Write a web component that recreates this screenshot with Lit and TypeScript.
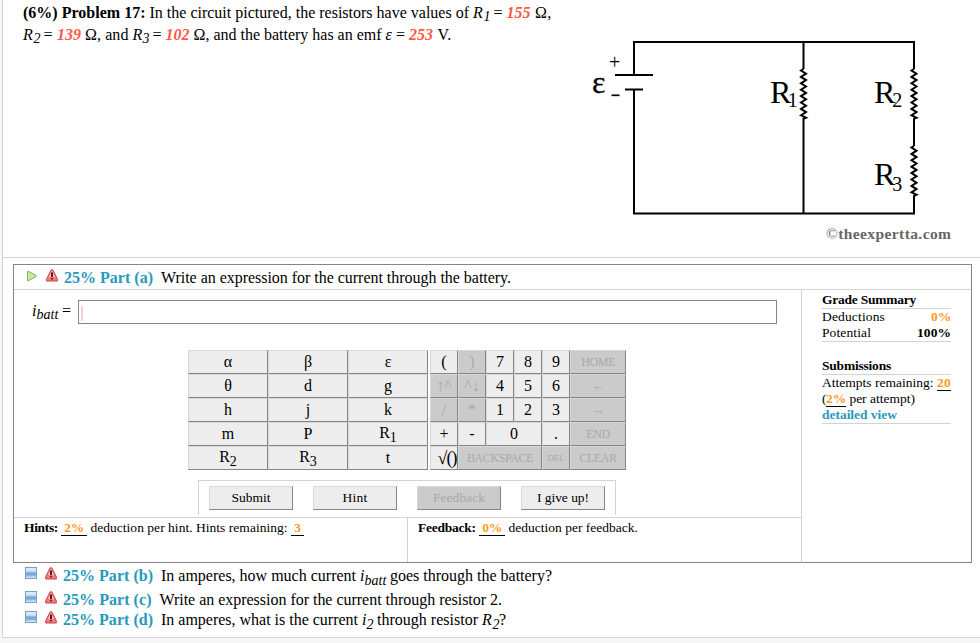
import { LitElement, html, svg, css } from "lit";
import { customElement } from "lit/decorators.js";

type Run = [text: string, start: number, kind?: string];

const STYLES: Record<string, string> = {
  "": "",
  b: "bold",
  blue: "bold",
  amber: "bold",
  i: "italic",
  red: "italic bold",
};

const pen = document.createElement("canvas").getContext("2d")!;

/** Lays out runs of text so each one begins at its own start position. */
function line(size: number, end: number, runs: Run[]) {
  return runs.map(([text, start, kind = ""], i) => {
    const width = (i + 1 < runs.length ? runs[i + 1][1] : end) - start;
    const sub = kind === "sub" || kind === "isub";
    const style = kind === "isub" ? "italic" : STYLES[kind] ?? "";
    pen.font = `${style} ${sub ? size - 2 : size}px "Liberation Serif"`;
    const spacing = (width - pen.measureText(text).width) / text.length;
    return html`<span class="run ${kind}" style="letter-spacing:${spacing.toFixed(3)}px">${text}</span>`;
  });
}

const warning = svg`<svg class="warn" width="12" height="13" viewBox="0 0 12 13">
  <path d="M4.9 1.300Q6 -.2 7.100 1.300L11.300 9.800V12H.7V9.800Z" fill="#f47a7a" stroke="#c4474a" stroke-linejoin="round"/>
  <path d="M6 1.800L9 8H3Z" fill="#fbd0cc"/>
  <path d="M5 3.600H7V8H5ZM5.200 9H6.800V10.500H5.200Z" fill="#5a1216"/>
</svg>`;

const play = svg`<svg class="mark" width="12" height="13" viewBox="0 0 12 13">
  <path d="M1.500 1.500Q1.500 1 2.200 1.200L10 5.300Q10.800 6 10 6.600L2.200 10.800Q1.500 11 1.500 10.500Z" fill="#c9e8a4" stroke="#86ad62"/>
</svg>`;

const box = svg`<svg class="mark" width="12" height="12" viewBox="0 0 12 12">
  <defs><linearGradient id="sky" x1="0" y1="0" x2="0" y2="1">
    <stop offset="0" stop-color="#e8f1fa"/><stop offset=".35" stop-color="#c2daf2"/>
    <stop offset=".5" stop-color="#6fa3dc"/><stop offset=".75" stop-color="#7fb0e4"/><stop offset="1" stop-color="#cfe3f6"/>
  </linearGradient></defs>
  <rect x=".5" y=".5" width="11" height="11" fill="#d3e4f5" stroke="#7f9fc2"/>
  <rect x="1" y="1.500" width="10" height="9" fill="url(#sky)"/>
</svg>`;

const zigzag = (x: number, y: number) => {
  let d = `M${x} ${y}l-2.5 1.5`;
  for (let k = 0; k < 7; k++) d += "l5 3.2l-5 3.2";
  return `${d}l5 2.4l-2.5 1`;
};

@customElement("app-root")
export class AppRoot extends LitElement {
  static styles = css`
    :host { display: block; width: 980px; height: 643px; overflow: hidden; background: #f7f7f7;
      font-family: "Liberation Serif", "Times New Roman", serif; color: #000; }
    * { box-sizing: border-box; }
    .page { height: 638px; background: #fff; border-bottom: 1px solid #d3d3d3; border-left: 1px solid #d3d3d3;
      margin-left: 2px; display: flex; flex-direction: column; }
    .problem { height: 258px; border-bottom: 1px solid #d3d3d3; display: flex; }
    .words { width: 577px; padding: 2px 0 0 20px; font-size: 16px; line-height: 22px; }
    .txt, .run { white-space: pre; }
    .b, .blue, .amber, .red { font-weight: bold; }
    .i, .isub, .red { font-style: italic; }
    .red { color: #ff5a47; }
    .blue { color: #2799bd; }
    .amber { color: #ff9a1e; }
    .sub, .isub { font-size: calc(1em - 2px); vertical-align: -3px; line-height: 0; }
    .part .isub { vertical-align: -4px; }
    .panel { margin: 6px 8px 0 10px; height: 299px; border: 1px solid #858585; display: flex; flex-direction: column; }
    .head { height: 25px; border-bottom: 1px solid #d3d3d3; display: flex; padding-left: 12px; font-size: 16px; line-height: 26px; }
    .mark { margin: 5px 8px 0 0; flex: none; }
    .warn { margin: 4px 6px 0 0; flex: none; }
    .cols { flex: 1; display: flex; min-height: 0; }
    .main { width: 788px; border-right: 1px solid #d3d3d3; display: flex; flex-direction: column; }
    .answer { display: flex; height: 60px; padding: 10px 0 0 18px; }
    .answer .txt { width: 46px; font-size: 16px; line-height: 22px; }
    .field { width: 699px; height: 24px; border: 1px solid #858585; padding: 5px 2px; }
    .caret { width: 2px; height: 15px; background: #fcd0bd; border-right: 1px solid #f3cdee; }
    .pads { display: flex; gap: 2px; padding-left: 174px; height: 120px; }
    .vars { display: grid; grid-template-columns: repeat(3, 80px); grid-auto-rows: 24px; }
    .keys { display: grid; grid-template-columns: repeat(5, 28px) 56px; grid-auto-rows: 24px; }
    .key { display: flex; align-items: center; justify-content: center; background: #ededed; font-size: 16px; white-space: pre;
      border: 1px solid; border-color: #d8d8d8 #858585 #858585 #d8d8d8; line-height: 20px; }
    .named { padding-bottom: 3px; }
    .key .sub { vertical-align: -4px; }
    .off { background: #cbcbcb; color: #a9a9a9; }
    .small { font-size: 12px; letter-spacing: -.4px; }
    .arrow { font-size: 13px; }
    .tiny { font-size: 9px; }
    .wide { grid-column: span 2; }
    .wider { grid-column: span 3; }
    .root { font-size: 18px; letter-spacing: -1px; padding-left: 6px; }
    .actions { margin: 10px 0 0 184px; width: 418px; height: 35px; border: 1px solid #d3d3d3; border-bottom: 0;
      display: flex; gap: 20px; padding: 5px 10px; }
    .btn { width: 84px; height: 24px; font-size: 13.500px; }
    .notes { margin-top: 2px; flex: 1; border-top: 1px solid #d3d3d3; display: flex; font-size: 13.500px; line-height: 20px; }
    .hints { width: 394px; border-right: 1px solid #d3d3d3; padding-left: 10px; }
    .feed { padding-left: 10px; }
    .u { border-bottom: 1px solid #000; }
    .side { padding: 1px 0 0 20px; width: 149px; font-size: 13.500px; line-height: 16px; }
    .side .txt { height: 16px; }
    .side .title { height: 18px; line-height: 18px; border-bottom: 1px solid #d3d3d3; }
    .side .last { height: 17px; border-bottom: 1px solid #d3d3d3; }
    .gap { height: 15px; }
    .part { display: flex; padding-left: 22px; font-size: 16px; line-height: 18px; height: 20px; }
    .part .mark, .part .warn { margin-top: 0; }
    .part.first { height: 24px; margin-top: 4px; }
  `;

  circuit() {
    return html`<svg width="390" height="256" viewBox="580 0 390 256">
      <g fill="none" stroke="#000" stroke-width="2">
        <path d="M634 75V42H914V69M803.500 42V69M803.500 118V213M914 118V146M914 195V213.500H634V90"/>
        <path d="M615 75H653M625 89.500H643"/>
        <path d="${zigzag(803.5, 69)}${zigzag(914, 69)}${zigzag(914, 146)}"/>
      </g>
      <g font-family="Liberation Serif">
        <text x="592" y="92.500" font-size="32" stroke="#000" stroke-width=".3">ε</text>
        <text x="609" y="69" font-size="20">+</text>
        <path d="M611.500 95.300H619.500" stroke="#000" stroke-width="1.700"/>
        <text x="770" y="102.500" font-size="32">R<tspan dx="-3.500" dy="4" font-size="20">1</tspan></text>
        <text x="874" y="102.500" font-size="32">R<tspan dx="-3" dy="4.500" font-size="20">2</tspan></text>
        <text x="874" y="184.500" font-size="32">R<tspan dx="-3" dy="6" font-size="20">3</tspan></text>
        <text x="826" y="239" font-size="15.500" textLength="125" fill="#666">©<tspan font-weight="bold">theexpertta.com</tspan></text>
      </g>
    </svg>`;
  }

  render() {
    const key = (label: unknown, cls = "") => html`<div class="key ${cls}">${label}</div>`;
    const r = (n: string) => html`<span>R<span class="sub">${n}</span></span>`;
    const vars = ["α", "β", "ε", "θ", "d", "g", "h", "j", "k", "m", "P", r("1"), r("2"), r("3"), "t"];
    return html`<div class="page">
      <div class="problem">
        <div class="words">
          <div class="txt">${line(16, 551, [["(6%) Problem 17: ", 22.5, "b"], ["In the circuit pictured, the resistors have values of ", 149], ["R", 472.5, "i"], ["1 ", 483, "isub"], ["= ", 493], ["155", 506, "red"], [" Ω,", 530]])}</div>
          <div class="txt">${line(16, 451, [["R", 22.5, "i"], ["2 ", 33, "isub"], ["= ", 43], ["139", 56.5, "red"], [" Ω, and ", 80.5], ["R", 132, "i"], ["3 ", 142, "isub"], ["= ", 152], ["102", 165, "red"], [" Ω, and the battery has an emf ", 189], ["ε ", 385, "i"], ["= ", 395.5], ["253", 408.5, "red"], [" V.", 432.5]])}</div>
        </div>
        ${this.circuit()}
      </div>
      <div class="panel">
        <div class="head">${play}${warning}<div class="txt">${line(16, 511, [["25% Part (a)", 64, "blue"], ["  ", 153], ["Write an expression for the current through the battery.", 161]])}</div></div>
        <div class="cols">
          <div class="main">
            <div class="answer">
              <div class="txt">${line(16, 72, [["i", 32, "i"], ["batt ", 36.5, "isub"], ["=", 62]])}</div>
              <div class="field"><div class="caret"></div></div>
            </div>
            <div class="pads">
              <div class="vars">${vars.map((v) => key(v, typeof v === "string" ? "" : "named"))}</div>
              <div class="keys">
                ${key("(")}${key(")", "off")}${key("7")}${key("8")}${key("9")}${key("HOME", "off small")}
                ${key("↑^", "off")}${key("^↓", "off")}${key("4")}${key("5")}${key("6")}${key("←", "off arrow")}
                ${key("/", "off")}${key("*", "off")}${key("1")}${key("2")}${key("3")}${key("→", "off arrow")}
                ${key("+")}${key("-")}${key("0", "wide")}${key(".")}${key("END", "off small")}
                ${key("√()", "root")}${key("BACKSPACE", "off small wider")}${key("DEL", "off tiny")}${key("CLEAR", "off small")}
              </div>
            </div>
            <div class="actions">
              ${key(line(13.5, 39, [["Submit", 0]]), "btn")}${key(line(13.5, 25, [["Hint", 0]]), "btn")}${key(line(13.5, 52, [["Feedback", 0]]), "btn off")}${key(line(13.5, 52, [["I give up!", 0]]), "btn")}
            </div>
            <div class="notes">
              <div class="hints txt">${line(13.5, 61, [["Hints: ", 24, "b"]])}<span class="u">${line(13.5, 87, [[" 2% ", 61, "amber"]])}</span>${line(13.5, 291, [[" deduction per hint. Hints remaining: ", 87]])}<span class="u">${line(13.5, 304, [[" 3 ", 291, "amber"]])}</span></div>
              <div class="feed txt">${line(13.5, 479, [["Feedback: ", 418, "b"]])}<span class="u">${line(13.5, 505, [[" 0% ", 479, "amber"]])}</span>${line(13.5, 638, [[" deduction per feedback.", 505]])}</div>
            </div>
          </div>
          <div class="side">
            <div class="txt title">${line(13.5, 916, [["Grade Summary", 822, "b"]])}</div>
            <div class="txt">${line(13.5, 951, [["Deductions", 822], [" ", 885], ["0%", 931, "amber"]])}</div>
            <div class="txt last">${line(13.5, 951, [["Potential", 822], [" ", 871], ["100%", 917, "b"]])}</div>
            <div class="gap"></div>
            <div class="txt title">${line(13.5, 891, [["Submissions", 822, "b"]])}</div>
            <div class="txt">${line(13.5, 937, [["Attempts remaining: ", 822]])}<span class="u">${line(13.5, 951, [["20", 937, "amber"]])}</span></div>
            <div class="txt">${line(13.5, 826, [["(", 822]])}<span class="u">${line(13.5, 846, [["2%", 826, "amber"]])}</span>${line(13.5, 915, [[" per attempt)", 846]])}</div>
            <div class="txt last">${line(13.5, 897, [["detailed view", 822, "blue"]])}</div>
          </div>
        </div>
      </div>
      <div class="part first">${box}${warning}<div class="txt">${line(16, 552, [["25% Part (b)", 63, "blue"], ["  ", 153], ["In amperes, how much current ", 161], ["i", 360, "i"], ["batt ", 364.5, "isub"], ["goes through the battery?", 390]])}</div></div>
      <div class="part">${box}${warning}<div class="txt">${line(16, 502, [["25% Part (c)", 63, "blue"], ["  ", 151.5], ["Write an expression for the current through resistor 2.", 159.5]])}</div></div>
      <div class="part">${box}${warning}<div class="txt">${line(16, 506, [["25% Part (d)", 63, "blue"], ["  ", 153], ["In amperes, what is the current ", 161], ["i", 362, "i"], ["2 ", 366.5, "isub"], ["through resistor ", 377], ["R", 482, "i"], ["2", 492.5, "isub"], ["?", 499]])}</div></div>
    </div>`;
  }
}
